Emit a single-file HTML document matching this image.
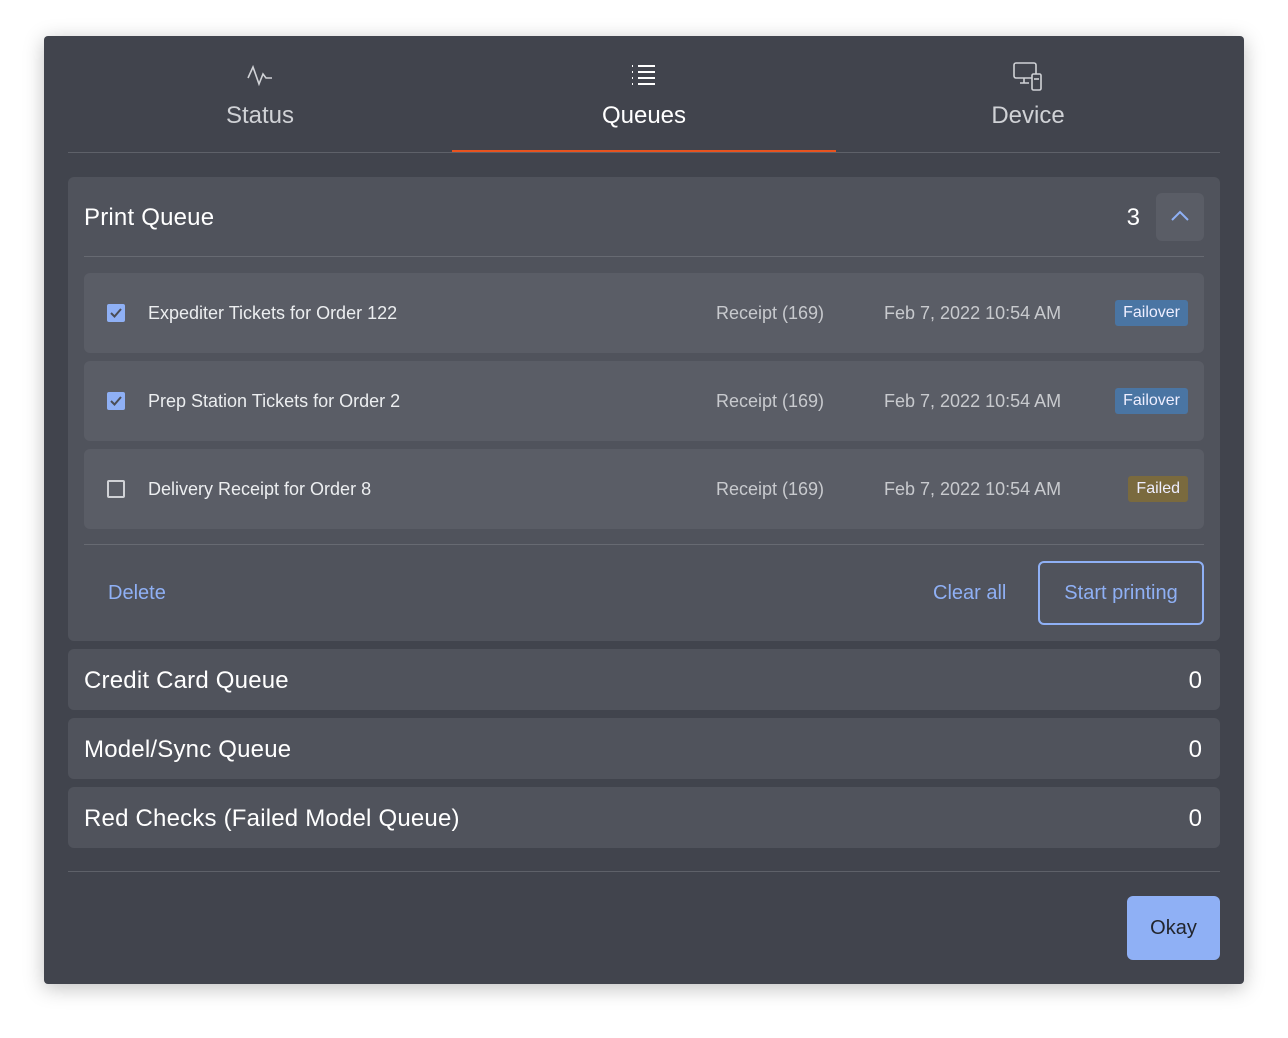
<!DOCTYPE html>
<html><head><style>
*{box-sizing:border-box;margin:0;padding:0}
body{width:1288px;height:1038px;background:#fff;font-family:"Liberation Sans",sans-serif;position:relative;overflow:hidden}
.dlg{position:absolute;left:44px;top:36px;width:1200px;height:948px;background:#41444d;border-radius:4px;box-shadow:0 4px 20px rgba(0,0,0,.25)}
.abs{position:absolute}
.tab{position:absolute;top:0;width:384px;text-align:center;color:#d0d2d6;font-size:24px}
.tab .lbl{position:absolute;top:66px;width:100%;text-align:center}
.card{position:absolute;left:24px;width:1152px;background:#50535c;border-radius:6px}
.item{position:absolute;left:16px;width:1120px;height:80px;background:#5a5d66;border-radius:6px;color:#eceef0;font-size:18px}
.item span{position:absolute;top:30px}
.cb{position:absolute;left:23px;top:31px;width:18px;height:18px;border-radius:2px}
.badge{position:absolute;top:27px;right:16px;height:26px;line-height:26px;padding:0 8px;border-radius:3px;font-size:16px;color:#eef}
.q{position:absolute;left:16px;font-size:24px;color:#fff;top:18px;letter-spacing:0.2px}
.n{position:absolute;right:18px;font-size:24px;color:#fff;top:18px}
</style></head><body>
<div class="dlg">
 <div class="tab" style="left:24px">
  <svg class="abs" style="left:178px;top:28px" width="28" height="24" viewBox="0 0 28 24" fill="none" stroke="#d0d2d6" stroke-width="1.6"><path d="M2 14 L7 3 L13 20 L17 10 L20 14 L26 14"/></svg>
  <div class="lbl">Status</div></div>
 <div class="tab" style="left:408px;color:#fff">
  <svg class="abs" style="left:178px;top:27px" width="28" height="26" viewBox="0 0 28 26" stroke="#fff" stroke-width="2"><path d="M2 3h1M8 3h17M2 9h1M8 9h17M2 15h1M8 15h17M2 21h1M8 21h17"/></svg>
  <div class="lbl">Queues</div></div>
 <div class="tab" style="left:792px">
  <svg class="abs" style="left:176px;top:25px" width="32" height="32" viewBox="0 0 32 32" fill="none" stroke="#d0d2d6" stroke-width="1.6"><rect x="2" y="2" width="22" height="15" rx="2"/><path d="M8 22h9M12 17v5"/><rect x="20" y="13" width="9" height="16" rx="1.5" fill="#41444d"/><path d="M22 18h5"/></svg>
  <div class="lbl">Device</div></div>
 <div class="abs" style="left:24px;top:116px;width:1152px;height:1px;background:#5e6169"></div>
 <div class="abs" style="left:408px;top:114px;width:384px;height:2px;background:#e8531f"></div>

 <div class="card" style="top:141px;height:464px">
  <div class="q" style="top:27px">Print Queue</div>
  <div class="abs" style="right:80px;top:27px;font-size:24px;color:#fff">3</div>
  <div class="abs" style="right:16px;top:16px;width:48px;height:48px;background:#5a5d66;border-radius:6px">
   <svg class="abs" style="left:14px;top:16px" width="20" height="14" viewBox="0 0 20 14" fill="none" stroke="#8fb0f5" stroke-width="2"><path d="M2 11 L10 3 L18 11"/></svg></div>
  <div class="abs" style="left:16px;top:79px;width:1120px;height:1px;background:#676a72"></div>
  <div class="item" style="top:96px"><div class="cb" style="background:#8fb0f5"><svg width="18" height="18" viewBox="0 0 18 18" fill="none" stroke="#4a4d56" stroke-width="2"><path d="M4 9l3.5 3.5L14 5"/></svg></div>
   <span style="left:64px">Expediter Tickets for Order 122</span><span style="left:632px;color:#c8cace">Receipt (169)</span><span style="left:800px;color:#c8cace">Feb 7, 2022 10:54 AM</span><div class="badge" style="background:#4a75a3">Failover</div></div>
  <div class="item" style="top:184px"><div class="cb" style="background:#8fb0f5"><svg width="18" height="18" viewBox="0 0 18 18" fill="none" stroke="#4a4d56" stroke-width="2"><path d="M4 9l3.5 3.5L14 5"/></svg></div>
   <span style="left:64px">Prep Station Tickets for Order 2</span><span style="left:632px;color:#c8cace">Receipt (169)</span><span style="left:800px;color:#c8cace">Feb 7, 2022 10:54 AM</span><div class="badge" style="background:#4a75a3">Failover</div></div>
  <div class="item" style="top:272px"><div class="cb" style="border:2px solid #d0d2d6"></div>
   <span style="left:64px">Delivery Receipt for Order 8</span><span style="left:632px;color:#c8cace">Receipt (169)</span><span style="left:800px;color:#c8cace">Feb 7, 2022 10:54 AM</span><div class="badge" style="background:#7a6a3e">Failed</div></div>
  <div class="abs" style="left:16px;top:367px;width:1120px;height:1px;background:#676a72"></div>
  <div class="abs" style="left:40px;top:405px;font-size:20px;color:#8fb0f5">Delete</div>
  <div class="abs" style="left:865px;top:405px;font-size:20px;color:#8fb0f5">Clear all</div>
  <div class="abs" style="left:970px;top:384px;width:166px;height:64px;border:2px solid #8fb0f5;border-radius:6px;color:#8fb0f5;font-size:20px;text-align:center;line-height:60px">Start printing</div>
 </div>
 <div class="card" style="top:613px;height:61px"><div class="q">Credit Card Queue</div><div class="n">0</div></div>
 <div class="card" style="top:682px;height:61px"><div class="q">Model/Sync Queue</div><div class="n">0</div></div>
 <div class="card" style="top:751px;height:61px"><div class="q">Red Checks (Failed Model Queue)</div><div class="n">0</div></div>
 <div class="abs" style="left:24px;top:835px;width:1152px;height:1px;background:#5e6169"></div>
 <div class="abs" style="left:1083px;top:860px;width:93px;height:64px;background:#8fb0f5;border-radius:6px;color:#22252c;font-size:20px;text-align:center;line-height:64px">Okay</div>
</div>
</body></html>
